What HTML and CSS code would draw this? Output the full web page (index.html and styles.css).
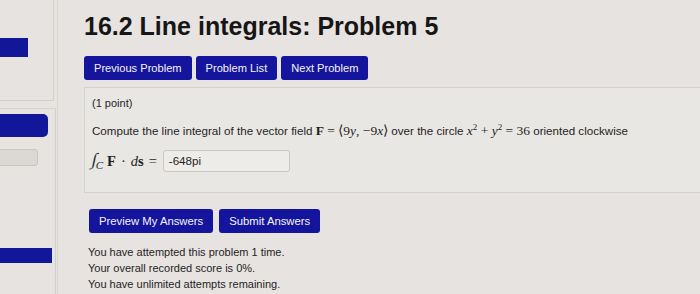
FILE: index.html
```html
<!DOCTYPE html>
<html>
<head>
<meta charset="utf-8">
<link rel="stylesheet" href="styles.css">
</head>
<body>
<div class="page">
  <aside class="side">
    <div class="side-top">
      <div class="side-blue1"></div>
    </div>
    <div class="side-mid">
      <div class="side-blue2"></div>
      <div class="side-gray"></div>
      <div class="side-blue3"></div>
    </div>
  </aside>
  <main class="main">
    <h1 class="title">16.2 Line integrals: Problem 5</h1>
    <div class="nav">
      <span class="btn">Previous Problem</span>
      <span class="btn">Problem List</span>
      <span class="btn">Next Problem</span>
    </div>
    <div class="problem">
      <p class="points">(1 point)</p>
      <p class="q">Compute the line integral of the vector field <span class="m"><b>F</b> = ⟨9<i>y</i>, −9<i>x</i>⟩</span> over the circle <span class="m"><i>x</i><sup>2</sup> + <i>y</i><sup>2</sup> = 36</span> oriented clockwise</p>
      <div class="ans">
        <span class="m int"><span class="intg">∫</span><span class="sub"><i>C</i></span><b>F</b><span class="dot">·</span><i>d</i> <b>s</b><span class="eq">=</span></span>
        <span class="input">-648pi</span>
      </div>
    </div>
    <div class="actions">
      <span class="btn btn2">Preview My Answers</span>
      <span class="btn btn2">Submit Answers</span>
    </div>
    <div class="info">
      <div>You have attempted this problem 1 time.</div>
      <div>Your overall recorded score is 0%.</div>
      <div>You have unlimited attempts remaining.</div>
    </div>
  </main>
</div>
</body>
</html>
```
FILE: styles.css
```css
html, body {
  margin: 0;
  padding: 0;
  background: #e7e3e0;
  font-family: "Liberation Sans", Arial, sans-serif;
  color: #1f1f1f;
  overflow: hidden;
}
.page {
  display: flex;
  width: 700px;
  height: 294px;
}
.side {
  width: 57px;
  flex: none;
  display: flex;
  flex-direction: column;
  border-right: 1px solid #d9d5d1;
}
.side-top {
  height: 62px;
  width: 53px;
  padding-top: 38px;
  border-right: 1px solid #d3cfcb;
  border-bottom: 1px solid #d3cfcb;
}
.side-blue1 {
  width: 28px;
  height: 19px;
  background: #12179a;
}
.side-mid {
  flex: 1;
  width: 55px;
  margin-top: 7px;
  border-top: 1px solid #d9d5d1;
  border-right: 1px solid #d3cfcb;
  display: flex;
  flex-direction: column;
  padding-top: 5px;
}
.side-blue2 {
  width: 48px;
  height: 23px;
  background: #12179a;
  border-radius: 0 5px 5px 0;
}
.side-gray {
  width: 37px;
  height: 15px;
  margin-top: 12px;
  background: #dcd8d4;
  border: 1px solid #c9c5c1;
  border-left: none;
  border-radius: 0 4px 4px 0;
}
.side-blue3 {
  width: 52px;
  height: 15px;
  margin-top: 82px;
  background: #12179a;
}
.main {
  flex: 1;
  padding-left: 26px;
}
.title {
  margin: 12px 0 0 0;
  font-size: 25px;
  font-weight: bold;
  color: #161616;
  line-height: 28px;
}
.nav {
  display: flex;
  gap: 4px;
  margin-top: 16px;
}
.btn {
  display: inline-block;
  background: #14159c;
  color: #f4f4f8;
  font-size: 11.1px;
  line-height: 24px;
  height: 24px;
  padding: 0 10px;
  border-radius: 3px;
}
.problem {
  margin-top: 7px;
  height: 106px;
  border-top: 1px solid #d4d0cc;
  border-left: 1px solid #d4d0cc;
  border-bottom: 1px solid #d4d0cc;
  background: #e9e7e4;
  padding-left: 7px;
  box-sizing: border-box;
}
.points {
  margin: 8px 0 0 0;
  font-size: 11px;
  line-height: 14px;
}
.q {
  margin: 14px 0 0 0;
  font-size: 11.6px;
  line-height: 14px;
}
.m {
  font-family: "Liberation Serif", "Times New Roman", serif;
  font-size: 13.5px;
}
.m sup {
  font-size: 9px;
  vertical-align: 5px;
  line-height: 0;
}
.ans {
  display: flex;
  align-items: center;
  margin-top: 12px;
  gap: 6px;
}
.int {
  display: inline-flex;
  align-items: center;
  white-space: pre;
  font-size: 14.5px;
}
.intg {
  font-style: italic;
  font-size: 17px;
  transform: skewX(-12deg);
  margin-top: -2px;
}
.sub {
  font-size: 11px;
  margin: 8px 4px 0 -1px;
}
.dot {
  margin: 0 5px;
}
.eq {
  margin-left: 5px;
}
.input {
  display: inline-block;
  width: 120px;
  height: 20px;
  line-height: 20px;
  border: 1px solid #cac7c3;
  border-radius: 3px;
  background: #eeece9;
  padding-left: 5px;
  font-size: 11.6px;
}
.actions {
  display: flex;
  gap: 6px;
  margin-top: 16px;
  padding-left: 5px;
}
.btn2 {
  padding: 0 10px;
  font-size: 11.3px;
}
.info {
  margin-top: 11px;
  padding-left: 4px;
  font-size: 11px;
  line-height: 16px;
}
```
